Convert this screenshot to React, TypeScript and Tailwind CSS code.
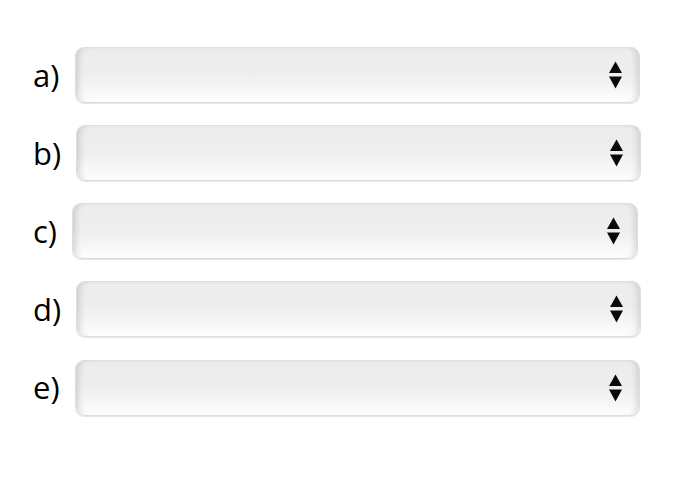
const rows = [
  { label: "a)", shift: "ml-0 w-[565px]" },
  { label: "b)", shift: "ml-px w-[565px]" },
  { label: "c)", shift: "-ml-[3px] w-[566px]" },
  { label: "d)", shift: "ml-px w-[565px]" },
  { label: "e)", shift: "ml-0 w-[565px] mt-px" },
];

const Arrows = () => (
  <svg width="13" height="28" viewBox="0 0 13 28" className="shrink-0">
    <path d="M6.5 0.5 L13 12 L0 12 Z" fill="#0a0a0a" />
    <path d="M0 15.5 L13 15.5 L6.5 27.5 Z" fill="#0a0a0a" />
  </svg>
);

const SelectBox = ({ className }: { className: string }) => (
  <div
    className={`${className} flex h-[56px] items-center justify-end rounded-[9px] border border-[#dedede] bg-[linear-gradient(180deg,#ececec_0%,#eeeeee_45%,#f4f4f4_70%,#fbfbfb_92%,#ffffff_100%)] pr-[17px] shadow-[inset_7px_0_7px_-5px_rgba(0,0,0,0.16),inset_-7px_0_7px_-5px_rgba(0,0,0,0.14),inset_0_-2px_0_#ffffff,0_1px_0_#e6e6e6]`}
  >
    <Arrows />
  </div>
);

export default function App() {
  return (
    <div className="h-[479px] w-[700px] bg-white pt-[47px] font-['Open_Sans',sans-serif]">
      <div className="flex flex-col gap-[22px]">
        {rows.map((r) => (
          <div key={r.label} className="flex items-center">
            <span className="w-[75px] pl-[33px] text-[31px] leading-none text-black">
              {r.label}
            </span>
            <SelectBox className={r.shift} />
          </div>
        ))}
      </div>
    </div>
  );
}
